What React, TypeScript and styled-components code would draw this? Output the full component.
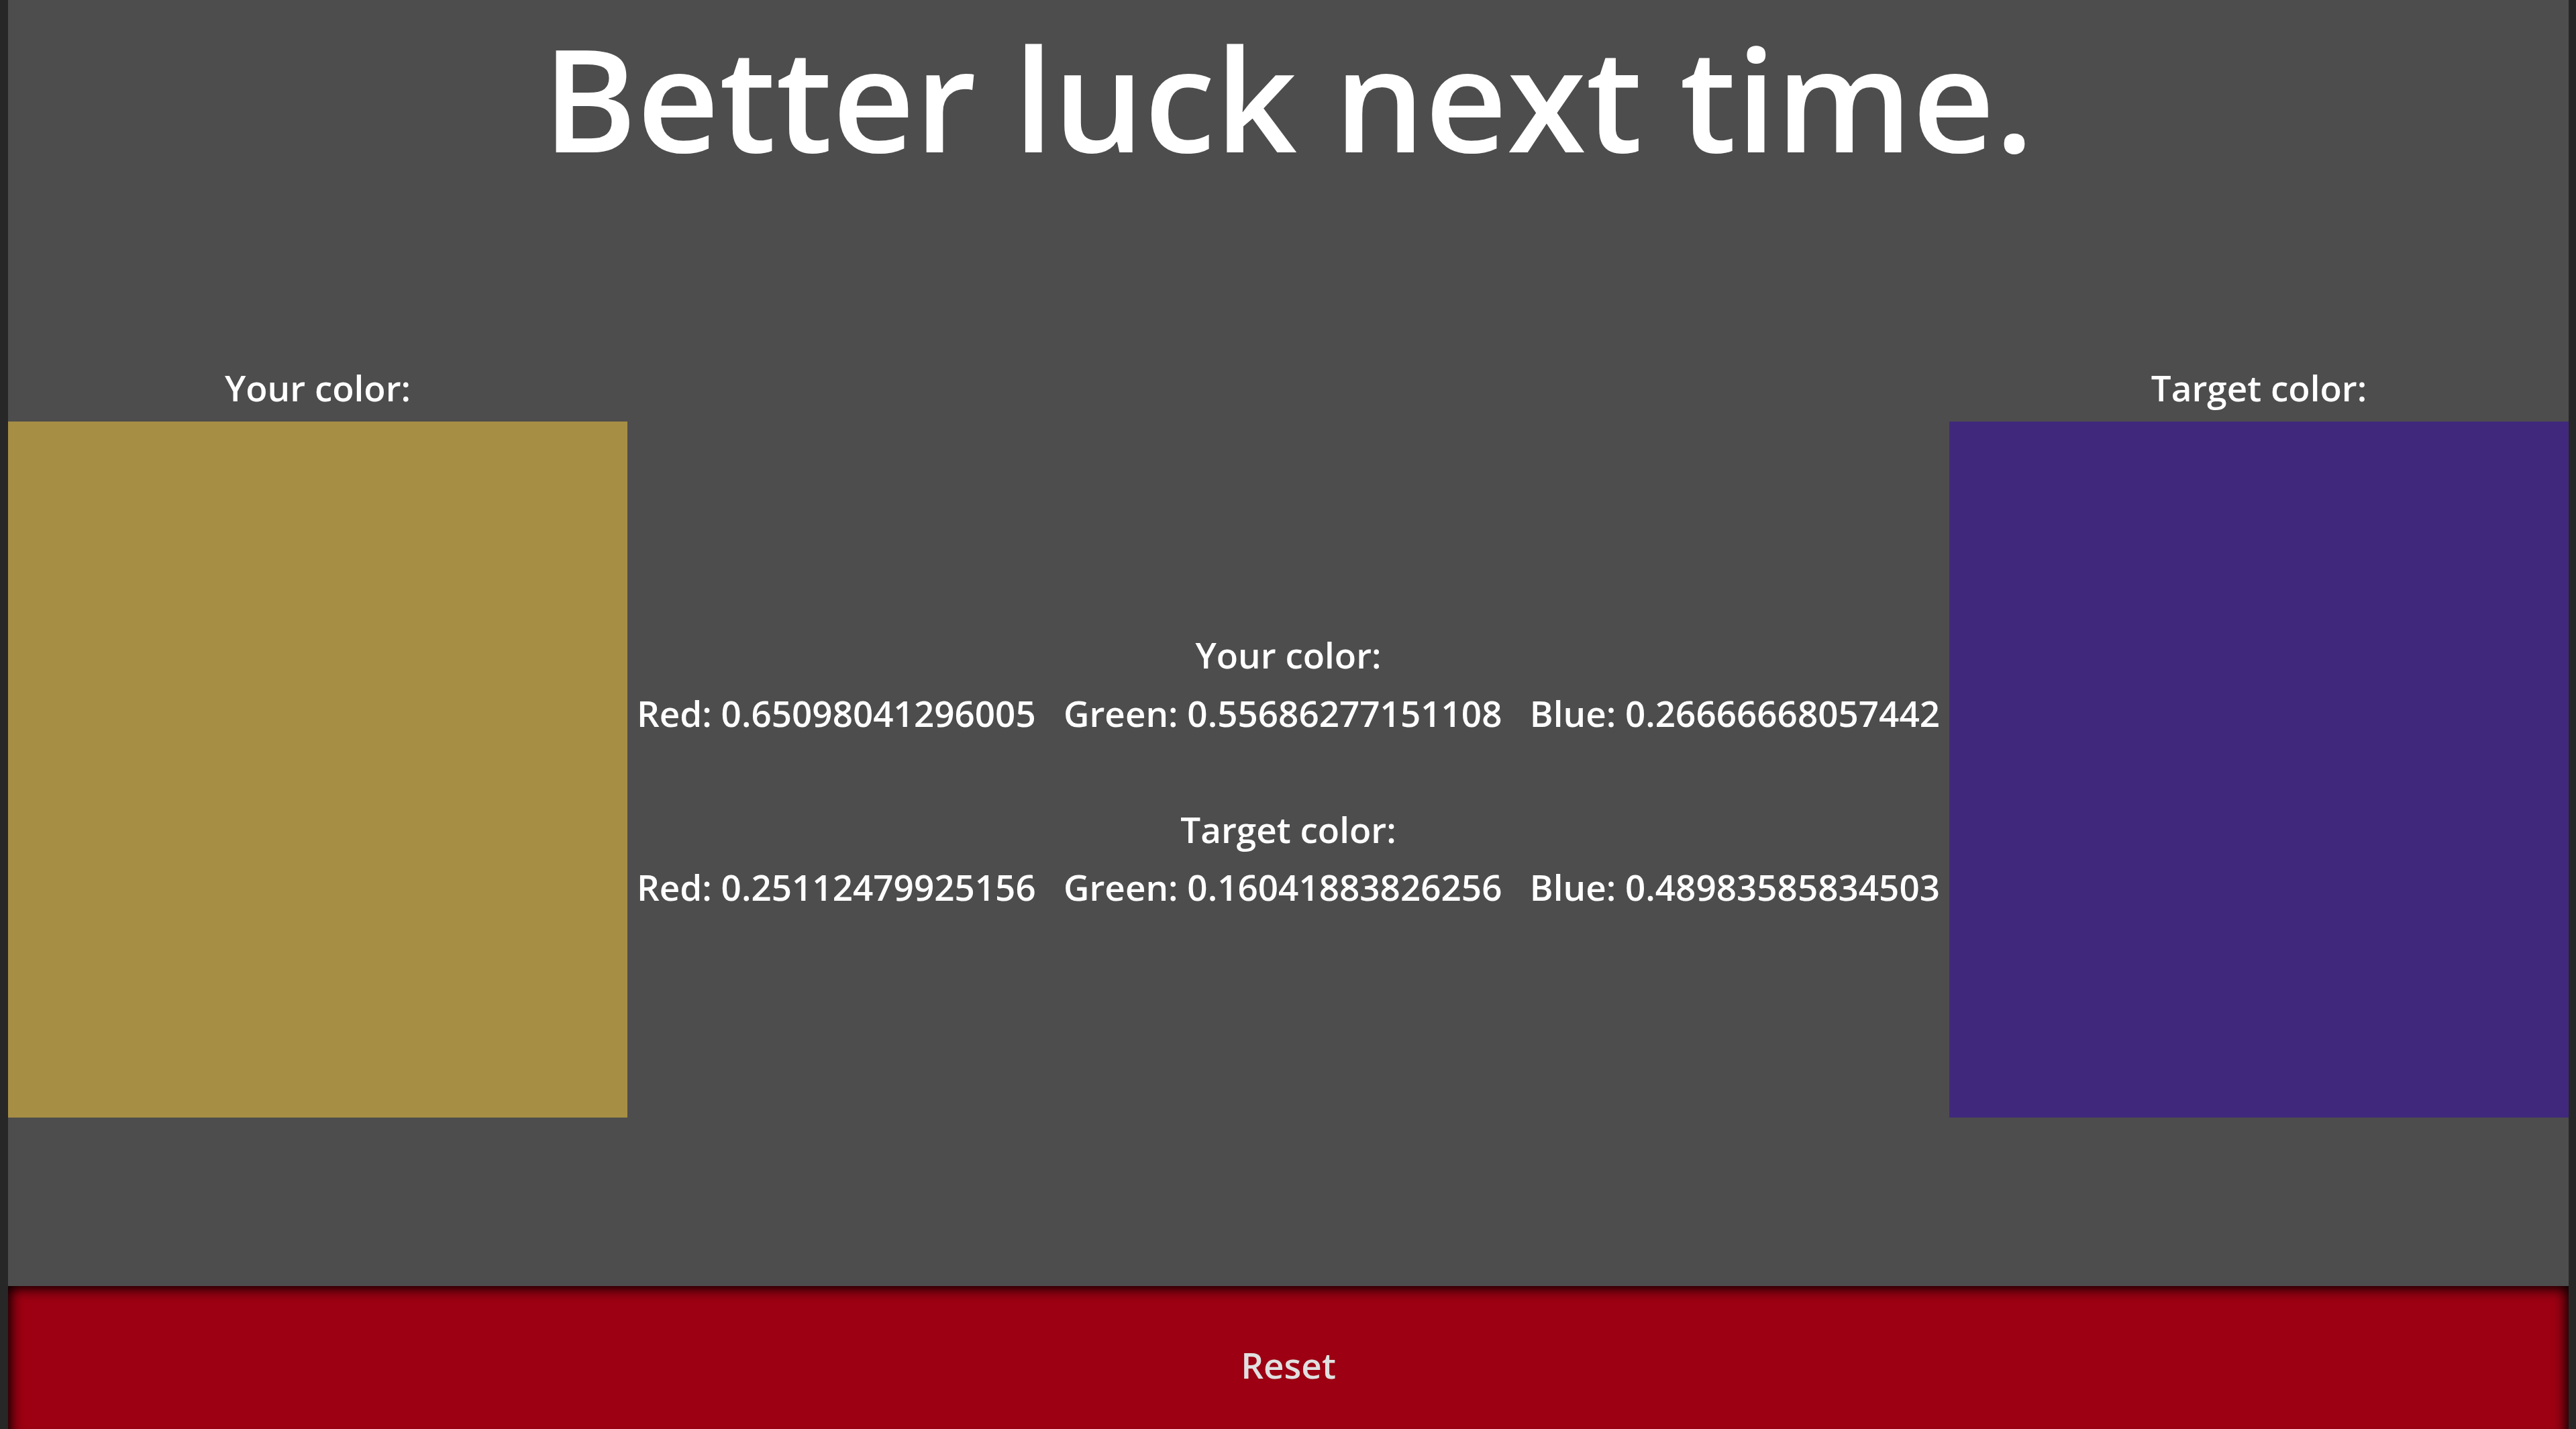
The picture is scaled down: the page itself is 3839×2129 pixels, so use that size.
import React from "react";
import styled, { createGlobalStyle } from "styled-components";

const GlobalStyle = createGlobalStyle`
  html, body {
    margin: 0;
    padding: 0;
    width: 3839px;
    height: 2129px;
    overflow: hidden;
    background: #272727;
  }
  body {
    font-family: "Open Sans", "Noto Sans", sans-serif;
    font-weight: 600;
    color: #ffffff;
  }
`;

const Screen = styled.div`
  width: 3839px;
  height: 2150px;
  box-sizing: border-box;
  padding: 0 11px 0 12px;
  display: flex;
  overflow: hidden;
`;

const Stage = styled.main`
  flex: 1;
  min-width: 0;
  display: flex;
  flex-direction: column;
`;

const Panel = styled.section`
  height: 1916px;
  background: #4d4d4d;
  display: flex;
  flex-direction: column;
`;

const Title = styled.h1`
  margin: 0;
  font-size: 213px;
  line-height: 288px;
  font-weight: 600;
  text-align: center;
  color: #ffffff;
`;

const Row = styled.div`
  margin-top: 252px;
  display: grid;
  grid-template-columns: 923px minmax(0, 1fr) 923px;
`;

const SwatchColumn = styled.div`
  display: flex;
  flex-direction: column;
  gap: 12px;
`;

const Label = styled.div`
  font-size: 53px;
  line-height: 76px;
  text-align: center;
`;

const Swatch = styled.div<{ $color: string }>`
  height: 1037px;
  background: ${(p) => p.$color};
`;

const Details = styled.div`
  margin-top: 88px;
  display: flex;
  align-items: center;
  justify-content: center;
`;

const DetailText = styled.div`
  font-size: 53px;
  line-height: 86.5px;
  padding-top: 6px;
  text-align: center;
  white-space: pre;
`;

const ResetButton = styled.button`
  height: 234px;
  border: none;
  margin: 0;
  padding: 0;
  background: #9c0012;
  box-shadow: inset 0 0 18px 4px #000000;
  color: #e0e0e0;
  font-family: "Open Sans", "Noto Sans", sans-serif;
  font-weight: 600;
  font-size: 53px;
  line-height: 75px;
  cursor: pointer;
`;

const yours = { r: "0.65098041296005", g: "0.55686277151108", b: "0.26666668057442" };
const target = { r: "0.25112479925156", g: "0.16041883826256", b: "0.48983585834503" };

const line = (c: { r: string; g: string; b: string }) =>
  `Red: ${c.r}   Green: ${c.g}   Blue: ${c.b}`;

export default function App() {
  return (
    <>
      <GlobalStyle />
      <Screen>
        <Stage>
          <Panel>
            <Title>Better luck next time.</Title>
            <Row>
              <SwatchColumn>
                <Label>Your color:</Label>
                <Swatch $color="#a68e44" />
              </SwatchColumn>
              <Details>
                <DetailText>
                  {`Your color:\n${line(yours)}\n\nTarget color:\n${line(target)}`}
                </DetailText>
              </Details>
              <SwatchColumn>
                <Label>Target color:</Label>
                <Swatch $color="#40297d" />
              </SwatchColumn>
            </Row>
          </Panel>
          <ResetButton>Reset</ResetButton>
        </Stage>
      </Screen>
    </>
  );
}
